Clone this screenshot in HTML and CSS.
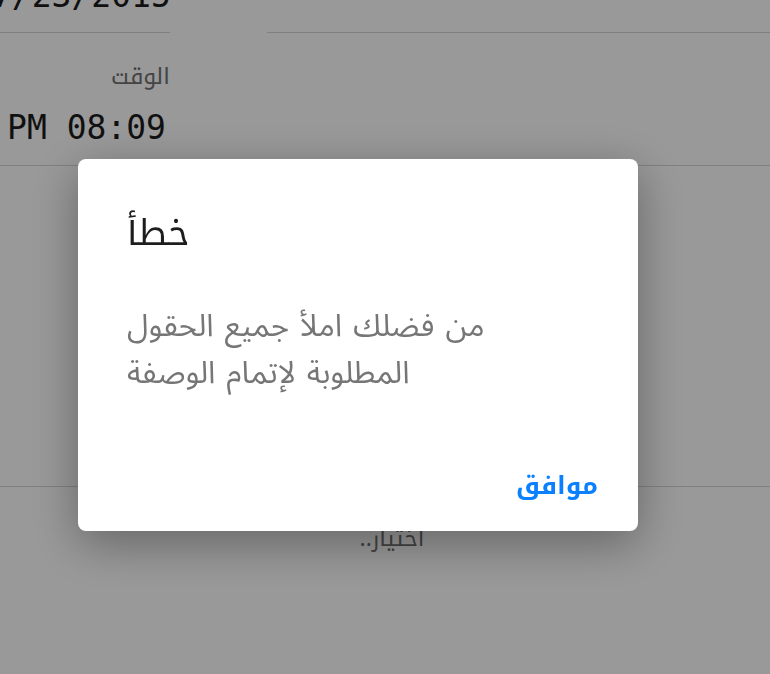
FILE: index.html
```html
<!DOCTYPE html>
<html lang="ar">

<head>
  <meta charset="UTF-8" />
  <meta name="viewport" content="width=device-width, initial-scale=1.0" />
  <title>إضافة وصفة</title>
  <link rel="stylesheet" href="styles.css">
</head>

<body>
  <main class="form">
    <div class="row top-row">
      <div class="field date-field">
        <div class="value">7/23/2015</div>
      </div>
      <div class="field other-field"></div>
    </div>

    <div class="row time-row">
      <div class="field time-field">
        <label class="label">الوقت</label>
        <div class="value">PM 08:09</div>
      </div>
    </div>

    <div class="row blank-row"></div>

    <div class="row choose-row">
      <span class="choose">اختيار..</span>
    </div>
  </main>

  <div class="scrim">
    <div class="dialog" role="alertdialog">
      <h2 class="dialog-title">خطأ</h2>
      <p class="dialog-msg">من فضلك املأ جميع الحقول المطلوبة لإتمام الوصفة</p>
      <div class="dialog-actions">
        <button class="btn-ok">موافق</button>
      </div>
    </div>
  </div>
</body>

</html>
```

FILE: styles.css
```css
:root {
  --line: #d6d6d6;
  --ink: #1c1c1c;
  --muted: #727272;
  --accent: #0a80ff;
}

body {
  margin: 0;
  font-family: 'Noto Kufi Arabic', 'DejaVu Sans', sans-serif;
  background: #fff;
  color: var(--ink);
  height: 674px;
  overflow: hidden;
}

.form {
  margin-top: -24px;
}

.row {
  display: flex;
}

.top-row {
  height: 57px;
}

.field .value {
  font-family: 'DejaVu Sans Mono', monospace;
  font-size: 33px;
  line-height: 40px;
  direction: ltr;
  text-align: right;
}

.date-field {
  width: 178px;
  border-bottom: 1px solid var(--line);
  margin-left: -8px;
  overflow: hidden;
}

.date-field .value {
  padding-right: 7px;
}

.other-field {
  margin-left: 97px;
  flex: 1;
  border-bottom: 1px solid var(--line);
}

.time-row {
  border-bottom: 1px solid var(--line);
  height: 132px;
}

.time-field {
  width: 170px;
  padding-top: 29px;
}

.time-field .label {
  display: block;
  direction: rtl;
  text-align: right;
  font-size: 23px;
  color: var(--muted);
  line-height: 30px;
}

.time-field .value {
  margin-top: 16px;
  padding-right: 4px;
}

.blank-row {
  height: 320px;
  border-bottom: 1px solid var(--line);
}

.choose-row {
  justify-content: center;
  padding-top: 30px;
  padding-left: 14px;
}

.choose {
  direction: rtl;
  font-size: 23px;
  color: var(--muted);
}

/* dim layer under the alert */
.scrim {
  position: fixed;
  inset: 0;
  background: rgba(0, 0, 0, 0.4);
  padding: 159px 0 0 78px;
}

.dialog {
  width: 560px;
  height: 372px;
  box-sizing: border-box;
  background: #fff;
  border-radius: 8px;
  box-shadow: 0 12px 48px rgba(0, 0, 0, 0.35);
  padding: 44px 40px 22px 49px;
  display: flex;
  flex-direction: column;
}

.dialog-title {
  margin: 0;
  font-size: 36px;
  font-weight: 400;
  color: #1d1d1d;
  line-height: 60px;
}

.dialog-msg {
  margin: 40px 0 0;
  font-family: 'Noto Sans Arabic', 'DejaVu Sans', sans-serif;
  font-size: 31px;
  line-height: 47px;
  word-spacing: 3px;
  color: #767676;
  width: 390px;
}

.dialog-actions {
  margin-top: auto;
  display: flex;
  justify-content: flex-end;
}

.btn-ok {
  background: none;
  border: none;
  padding: 0;
  font-family: inherit;
  font-size: 25px;
  font-weight: 700;
  color: var(--accent);
  cursor: pointer;
}
```
